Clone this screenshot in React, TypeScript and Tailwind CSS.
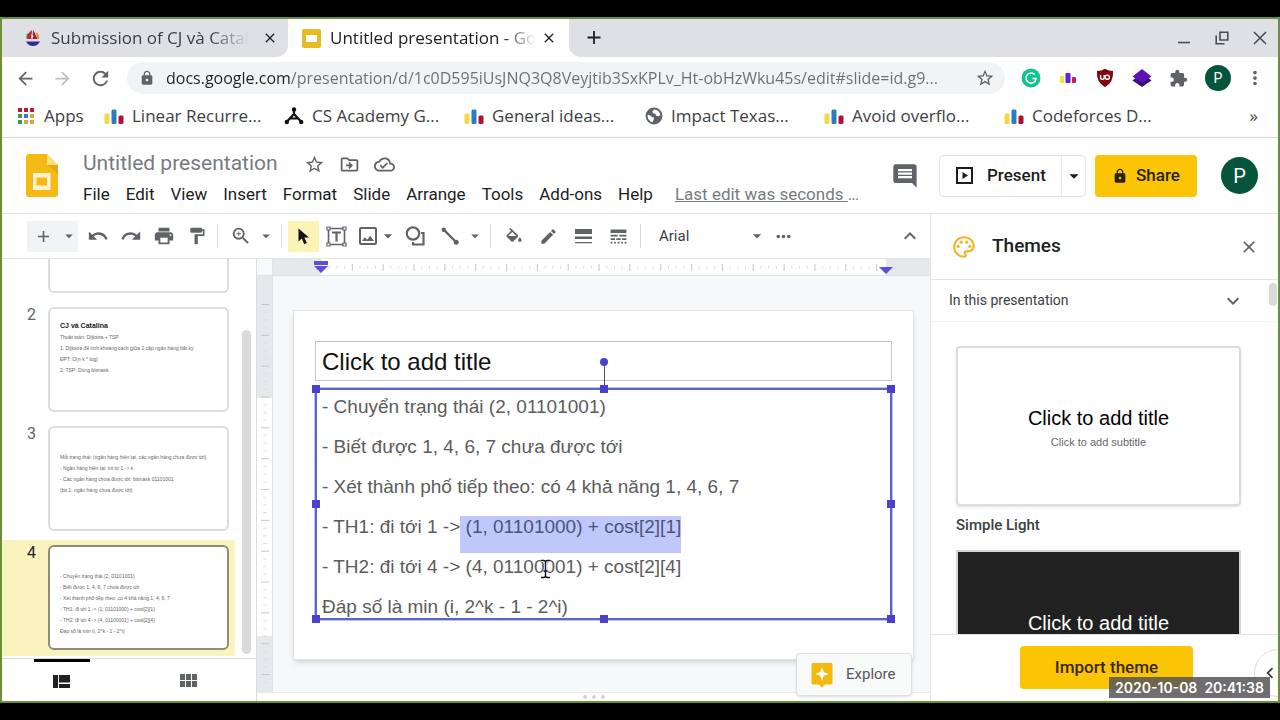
import type { ReactNode } from "react";
import {
  MdAdd,
  MdArrowBack,
  MdArrowDropDown,
  MdArrowForward,
  MdClose,
  MdComment,
  MdEdit,
  MdExtension,
  MdFormatPaint,
  MdKeyboardArrowDown,
  MdKeyboardArrowLeft,
  MdKeyboardArrowUp,
  MdLineStyle,
  MdLock,
  MdMoreHoriz,
  MdMoreVert,
  MdOutlineCloudDone,
  MdOutlineDriveFileMove,
  MdOutlineImage,
  MdOutlinePalette,
  MdPrint,
  MdRedo,
  MdRefresh,
  MdStarBorder,
  MdUndo,
  MdZoomIn,
} from "react-icons/md";

const bookmarks = [
  { label: "Linear Recurre...", icon: "bars" },
  { label: "CS Academy G...", icon: "academy" },
  { label: "General ideas...", icon: "bars" },
  { label: "Impact Texas...", icon: "globe" },
  { label: "Avoid overflo...", icon: "bars" },
  { label: "Codeforces D...", icon: "bars" },
];

const menus = ["File", "Edit", "View", "Insert", "Format", "Slide", "Arrange", "Tools", "Add-ons", "Help"];

const slides = [
  { n: 1, title: "", lines: [] as string[] },
  {
    n: 2,
    title: "CJ và Catalina",
    lines: [
      "Thuật toán: Dijkstra + TSP",
      "1. Dijkstra để tính khoảng cách giữa 2 cặp ngân hàng bất kỳ.",
      "ĐPT: O(n·k * log)",
      "2. TSP: Dùng bitmask",
    ],
  },
  {
    n: 3,
    title: "",
    lines: [
      "Mỗi trạng thái: (ngân hàng hiện tại, các ngân hàng chưa được tới)",
      "- Ngân hàng hiện tại: int từ 1 -> k",
      "- Các ngân hàng chưa được tới: bitmask 01101001",
      "(bit 1: ngân hàng chưa được tới)",
    ],
  },
  {
    n: 4,
    title: "",
    lines: [
      "- Chuyển trạng thái (2, 01101001)",
      "- Biết được 1, 4, 6, 7 chưa được tới",
      "- Xét thành phố tiếp theo: có 4 khả năng 1, 4, 6, 7",
      "- TH1: đi tới 1 -> (1, 01101000) + cost[2][1]",
      "- TH2: đi tới 4 -> (4, 01100001) + cost[2][4]",
      "Đáp số là min (i, 2^k - 1 - 2^i)",
    ],
  },
];

function BarsIcon({ colors = ["#f5d848", "#2a7dc0", "#b01030"], size = 20 }) {
  return (
    <svg width={size} height={size} viewBox="0 0 20 20" className="shrink-0">
      <rect x="0.5" y="7.5" width="5" height="10.5" rx="1.5" fill={colors[0]} />
      <rect x="7.5" y="3.5" width="5" height="14.5" rx="1.5" fill={colors[1]} />
      <rect x="14.5" y="9.5" width="5" height="8.5" rx="1.5" fill={colors[2]} />
    </svg>
  );
}

function BookmarkIcon({ kind }: { kind: string }) {
  if (kind === "bars") return <BarsIcon />;
  if (kind === "academy") {
    return (
      <svg width="20" height="20" viewBox="0 0 20 20" className="shrink-0">
        <path d="M10 3.5 L10 8 L2.5 16 M10 8 L17.5 16 M6.5 12.5 H13.5" stroke="#111" strokeWidth="2.2" fill="none" />
        <circle cx="10" cy="3.5" r="2.2" fill="#111" />
        <circle cx="2.8" cy="16" r="2.2" fill="#111" />
        <circle cx="17.2" cy="16" r="2.2" fill="#111" />
      </svg>
    );
  }
  return (
    <svg width="18" height="18" viewBox="0 0 18 18" className="ml-px shrink-0">
      <circle cx="9" cy="9" r="8.4" fill="#5f6368" />
      <path
        d="M2.6 8 C4.5 8 6 8.6 6.6 10 L9 10.5 L8.6 12.6 L7.6 15.2 C4.6 14.6 2.5 12 2.6 8 Z M9 2.6 L7.2 5 L8.4 6.6 L10.6 6.8 L11 8.6 L13.2 9.2 L15.3 8.4 C15 5.2 12.6 2.8 9 2.6 Z"
        fill="#fff"
      />
    </svg>
  );
}

function TabStrip() {
  return (
    <div className="flex h-[38px] text-[17px] text-[#3b3e42]">
      <div className="flex w-[286px] items-center rounded-br-xl bg-[#dee0e6] pl-[21px] pr-[9px]">
        <svg width="20" height="20" viewBox="0 0 20 20" className="shrink-0">
          <path d="M3.5 6.5 Q3.5 5 6 5.5 L6 11 H3.5 Z" fill="#38a03c" />
          <path d="M8.8 2 V11 H4 Q4.5 5 8.8 2 Z" fill="#c52238" />
          <path d="M10 1.5 L14.5 11 H9.5 Z" fill="#9c1c2c" />
          <path d="M12.5 4 Q16.5 6 16 11 L14.6 11 Z" fill="#ee7a22" />
          <path d="M8.3 6 L10.8 8.5 L8.3 11 Z" fill="#f4f4f4" />
          <path d="M3 13.5 H17 Q14.5 18 10 18 Q5.500 18 3 13.5 Z" fill="#2f2b9a" />
        </svg>
        <span className="ml-2 whitespace-nowrap [mask-image:linear-gradient(90deg,#000_80%,transparent)]">
          Submission of CJ và Catal
        </span>
        <button aria-label="Close tab" className="ml-auto flex size-[18px] items-center justify-center text-[#202124]">
          <MdClose size={16} />
        </button>
      </div>
      <div className="flex w-[281px] items-center pl-[14px] pr-[11px] text-[#202124]">
        <svg width="19" height="19" viewBox="0 0 19 19" className="shrink-0">
          <rect width="19" height="19" rx="2" fill="#e6bb24" />
          <rect x="4" y="6" width="11" height="7" fill="#fff" />
        </svg>
        <span className="ml-[9px] whitespace-nowrap [mask-image:linear-gradient(90deg,#000_84%,transparent)]">
          Untitled presentation - Go
        </span>
        <button aria-label="Close tab" className="ml-auto flex size-[18px] items-center justify-center">
          <MdClose size={16} />
        </button>
      </div>
      <div className="flex flex-1 items-center rounded-bl-xl bg-[#dee0e6] pl-[13px] pr-[11px]">
        <button aria-label="New tab" className="text-[#202124]">
          <svg width="24" height="24" viewBox="0 0 24 24" fill="none" stroke="currentColor" strokeWidth="1.8" className="block">
            <path d="M12 5 V18 M5.500 11.500 H18.500" />
          </svg>
        </button>
        <div className="ml-auto flex items-center gap-6 text-[#4a4d51]">
          <button aria-label="Minimize">
            <svg width="14" height="14" viewBox="0 0 14 14" fill="none" stroke="currentColor" strokeWidth="1.6">
              <path d="M1 11.5 H13" />
            </svg>
          </button>
          <button aria-label="Restore">
            <svg width="14" height="14" viewBox="0 0 14 14" fill="none" stroke="currentColor" strokeWidth="1.6">
              <path d="M5 1.2 H12.8 V9 H5 Z M1.2 4.5 V12.8 H9.5" />
            </svg>
          </button>
          <button aria-label="Close window">
            <svg width="14" height="14" viewBox="0 0 14 14" fill="none" stroke="currentColor" strokeWidth="1.6">
              <path d="M1 1 L13 13 M13 1 L1 13" />
            </svg>
          </button>
        </div>
      </div>
    </div>
  );
}

function AddressBar() {
  return (
    <div className="flex h-[42px] items-center pl-[13px] pr-3 text-[#5f6368]">
      <button aria-label="Back">
        <MdArrowBack size={21} />
      </button>
      <button aria-label="Forward" className="ml-4 text-[#bcbec1]">
        <MdArrowForward size={21} />
      </button>
      <button aria-label="Reload" className="ml-4">
        <MdRefresh size={23} />
      </button>
      <div className="ml-[15px] flex h-8 flex-1 items-center rounded-full bg-[#f1f3f4] pl-3 pr-[10px]">
        <MdLock size={16} className="shrink-0" />
        <input
          aria-label="Address"
          readOnly
          value="docs.google.com/presentation/d/1c0D595iUsJNQ3Q8Veyjtib3SxKPLv_Ht-obHzWku45s/edit#slide=id.g9..."
          className="ml-[11px] min-w-0 flex-1 bg-[linear-gradient(90deg,#202124_125px,#6b6f73_125px)] bg-clip-text text-[16px] text-transparent outline-none"
        />
        <button aria-label="Bookmark this page">
          <MdStarBorder size={20} />
        </button>
      </div>
      <div className="ml-4 flex items-center gap-[17px]">
        <button aria-label="Grammarly">
          <svg width="20" height="20" viewBox="0 0 20 20" className="block">
            <circle cx="10" cy="10" r="9.5" fill="#17c08f" />
            <path d="M13.6 6.6 A5 5 0 1 0 15 10.6 H11.5 M15 10.6 L14 14" fill="none" stroke="#fff" strokeWidth="1.5" />
          </svg>
        </button>
        <button aria-label="Codeforces extension">
          <svg width="20" height="20" viewBox="0 0 20 20" className="block">
            <rect x="2" y="8" width="4" height="7" rx="1" fill="#f2e91c" />
            <rect x="7.500" y="5" width="5" height="10" rx="1" fill="#6a1be0" />
            <rect x="14" y="9" width="4" height="6" rx="1" fill="#d01848" />
          </svg>
        </button>
        <button aria-label="uBlock Origin">
          <svg width="20" height="20" viewBox="0 0 20 20" className="block">
            <path d="M10 0.8 Q13.5 3 18 3 Q19 14 10 19.2 Q1 14 2 3 Q6.5 3 10 0.8 Z" fill="#800610" />
            <path d="M5.6 7 V9.6 Q5.6 11.4 7.4 11.4 Q9.2 11.4 9.2 9.6 V7" fill="none" stroke="#fff" strokeWidth="1.4" />
            <circle cx="12.3" cy="9.2" r="2.1" fill="none" stroke="#fff" strokeWidth="1.4" />
          </svg>
        </button>
        <button aria-label="Layers extension">
          <svg width="20" height="20" viewBox="0 0 20 20" className="block">
            <path d="M10 5 L19.5 12.5 L10 19 L0.5 12.5 Z" fill="#35107a" />
            <path d="M10 1 L19.5 8.5 L10 15 L0.5 8.5 Z" fill="#5b12b4" />
          </svg>
        </button>
        <button aria-label="Extensions">
          <MdExtension size={19} />
        </button>
        <button
          aria-label="Profile"
          className="flex size-[26px] items-center justify-center rounded-full bg-[#06543c] text-[14px] text-white [font-family:Roboto,sans-serif]"
        >
          P
        </button>
      </div>
      <button aria-label="Menu" className="ml-[13px]">
        <MdMoreVert size={22} />
      </button>
    </div>
  );
}

function BookmarksBar() {
  return (
    <div className="flex h-[39px] items-center border-b border-[#d4d6d9] pb-1 pl-4 pr-5 text-[17px] text-[#3b3e42]">
      <a href="#apps" className="flex w-[86px] items-center gap-[10px]">
        <svg width="16" height="16" viewBox="0 0 16 16">
          {["#b01c30", "#b01c30", "#b01c30", "#3c9a58", "#3a78c8", "#d8a83c", "#3c9a58", "#c8a850", "#d8a83c"].map((c, i) => (
            <rect key={i} x={(i % 3) * 6} y={Math.floor(i / 3) * 6} width="4" height="4" fill={c} />
          ))}
        </svg>
        Apps
      </a>
      {bookmarks.map((b) => (
        <a key={b.label} href="#bookmark" className="flex w-[180px] items-center gap-2 whitespace-nowrap">
          <BookmarkIcon kind={b.icon} />
          {b.label}
        </a>
      ))}
      <button aria-label="More bookmarks" className="ml-auto">
        »
      </button>
    </div>
  );
}

function DocHeader() {
  return (
    <header className="flex h-[76px] items-center border-b border-[#e3e5e8] pl-6 pr-5">
      <svg width="32" height="43" viewBox="0 0 32 43" className="shrink-0">
        <path d="M3 0 H21 L32 11 V40 Q32 43 29 43 H3 Q0 43 0 40 V3 Q0 0 3 0 Z" fill="#f5ba14" />
        <path d="M21 0 L32 11 H21 Z" fill="#fbdf7c" />
        <path d="M21 11 H32 V20 Z" fill="#e5a80e" />
        <path d="M7 19 H24.500 V36 H7 Z M10.500 23.500 V31.500 H21 V23.500 Z" fill="#fdf3d2" fillRule="evenodd" />
      </svg>
      <div className="ml-[25px] min-w-0 pt-[7px]">
        <div className="flex h-8 items-center">
          <input
            aria-label="Presentation title"
            defaultValue="Untitled presentation"
            className="w-[207px] text-[21px] leading-8 text-[#777b7f] outline-none"
          />
          <div className="ml-[14px] flex items-center gap-[14px] pt-[3px] text-[#5f6368]">
            <button aria-label="Star">
              <MdStarBorder size={21} />
            </button>
            <button aria-label="Move">
              <MdOutlineDriveFileMove size={21} />
            </button>
            <button aria-label="Saved to Drive">
              <MdOutlineCloudDone size={21} />
            </button>
          </div>
        </div>
        <nav className="flex h-8 items-center gap-4 whitespace-nowrap text-[17px] text-[#1c1d1f]">
          {menus.map((m) => (
            <button key={m}>{m}</button>
          ))}
          <a href="#history" className="ml-[6px] text-[#777b7f]">
            <span className="whitespace-pre underline">Last edit was seconds </span>…
          </a>
        </nav>
      </div>
      <button aria-label="Comments" className="ml-auto text-[#5f6368]">
        <MdComment size={28} />
      </button>
      <div className="ml-5 flex h-[42px] shrink-0 rounded border border-[#e1e3e6] text-[17px] font-medium text-[#1c1d1f]">
        <button className="flex w-[121px] items-center gap-[14px] pl-4">
          <svg width="17" height="17" viewBox="0 0 17 17" fill="none" stroke="currentColor" strokeWidth="2">
            <rect x="1" y="1" width="15" height="15" />
            <path d="M6.500 5 V12 L12 8.500 Z" fill="currentColor" stroke="none" />
          </svg>
          Present
        </button>
        <button aria-label="Present options" className="flex w-6 items-center justify-center border-l border-[#e1e3e6]">
          <MdArrowDropDown size={22} className="shrink-0" />
        </button>
      </div>
      <button className="ml-[9px] flex h-[42px] w-[102px] shrink-0 items-center justify-center gap-2 rounded bg-[#fbc404] text-[17px] font-medium text-[#2a2205]">
        <MdLock size={16} />
        Share
      </button>
      <button
        aria-label="Account"
        className="ml-6 flex size-[37px] shrink-0 items-center justify-center rounded-full bg-[#06543c] text-[20px] text-white"
      >
        P
      </button>
    </header>
  );
}

function Tool({ label, className = "w-[33px]", children }: { label: string; className?: string; children: ReactNode }) {
  return (
    <button aria-label={label} className={"flex h-[31px] shrink-0 items-center justify-center " + className}>
      {children}
    </button>
  );
}

function Divider({ className }: { className: string }) {
  return <div className={"h-6 w-px shrink-0 bg-[#dadce0] " + className} />;
}

function Toolbar() {
  return (
    <div className="flex h-[45px] items-center border-b border-[#e3e5e8] pl-[25px] pr-2 text-[#5f6368]">
      <div className="flex bg-[#f1f3f4]">
        <Tool label="New slide">
          <MdAdd size={19} />
        </Tool>
        <Tool label="New slide with layout" className="w-[18px]">
          <MdArrowDropDown size={20} />
        </Tool>
      </div>
      <Tool label="Undo" className="ml-[3px] w-[33px]">
        <MdUndo size={22} />
      </Tool>
      <Tool label="Redo">
        <MdRedo size={22} />
      </Tool>
      <Tool label="Print">
        <MdPrint size={22} />
      </Tool>
      <Tool label="Paint format">
        <MdFormatPaint size={20} />
      </Tool>
      <Divider className="ml-1" />
      <Tool label="Zoom" className="ml-[6px] w-[33px]">
        <MdZoomIn size={22} />
      </Tool>
      <Tool label="Zoom options" className="w-[18px]">
        <MdArrowDropDown size={20} />
      </Tool>
      <Divider className="ml-[6px]" />
      <Tool label="Select" className="ml-[6px] w-[31px] bg-[#fbf4b4] text-[#111]">
        <svg width="12" height="17" viewBox="0 0 12 17" fill="currentColor">
          <path d="M0.500 0.500 V13.500 L3.800 10.600 L6.200 16.200 L8.800 15 L6.400 9.600 H11 Z" />
        </svg>
      </Tool>
      <Tool label="Text box" className="w-[34px]">
        <svg width="21" height="21" viewBox="0 0 21 21" fill="none" stroke="currentColor">
          <path d="M4 2.500 H17 M4 18.500 H17 M2.500 4 V17 M18.500 4 V17" strokeWidth="1.600" />
          <path d="M1 1 H4 V4 H1 Z M17 1 H20 V4 H17 Z M1 17 H4 V20 H1 Z M17 17 H20 V20 H17 Z" strokeWidth="1.200" />
          <path d="M6 6.500 H15 M10.500 6.500 V15.500" strokeWidth="2.200" />
        </svg>
      </Tool>
      <Tool label="Image" className="w-[29px]">
        <MdOutlineImage size={24} />
      </Tool>
      <Tool label="Image options" className="w-3">
        <MdArrowDropDown size={20} className="shrink-0" />
      </Tool>
      <Tool label="Shape" className="ml-[5px] w-[31px]">
        <svg width="20" height="20" viewBox="0 0 20 20" fill="none" stroke="currentColor" strokeWidth="2.200">
          <circle cx="8" cy="7.500" r="6.200" />
          <path d="M16 7 H18.500 V18.500 H8 V16" />
        </svg>
      </Tool>
      <Tool label="Line" className="ml-[3px] w-[33px]">
        <svg width="18" height="18" viewBox="0 0 18 18" fill="currentColor" stroke="currentColor">
          <path d="M3 3 L15 15" strokeWidth="2.400" />
          <circle cx="2.800" cy="2.800" r="2.200" stroke="none" />
          <circle cx="15.200" cy="15.200" r="2.500" stroke="none" />
        </svg>
      </Tool>
      <Tool label="Line options" className="w-[18px]">
        <MdArrowDropDown size={20} />
      </Tool>
      <Divider className="ml-[6px]" />
      <Tool label="Fill color" className="ml-[5px] w-[35px]">
        <svg width="20" height="20" viewBox="0 -2 24 24" fill="currentColor">
          <path d="M16.560 8.940 L7.620 0 L6.210 1.410 L8.590 3.790 L3.440 8.940 a1.490 1.490 0 0 0 0 2.120 l5.500 5.500 c.290.290.680.440 1.060.440 s.770-.150 1.060-.440 l5.500-5.500 c.590-.580.590-1.530 0-2.120 z M5.210 10 L10 5.210 L14.790 10 Z M19 11.500 s-2 2.170-2 3.500 c0 1.100.900 2 2 2 s2-.900 2-2 c0-1.330-2-3.500-2-3.500 z" />
        </svg>
      </Tool>
      <Tool label="Border color" className="w-[35px]">
        <MdEdit size={19} />
      </Tool>
      <Tool label="Border weight" className="w-[35px]">
        <svg width="17" height="15" viewBox="0 0 17 15" fill="currentColor">
          <path d="M0 0 H17 V5 H0 Z M0 7.500 H17 V10 H0 Z M0 13 H17 V14.300 H0 Z" />
        </svg>
      </Tool>
      <Tool label="Border dash" className="w-[35px]">
        <MdLineStyle size={21} />
      </Tool>
      <Divider className="ml-1" />
      <div className="ml-[18px] flex items-center">
        <select aria-label="Font" className="w-[88px] appearance-none text-[15px] text-[#3c4043] outline-none">
          <option>Arial</option>
        </select>
        <MdArrowDropDown size={20} />
      </div>
      <Tool label="More">
        <MdMoreHoriz size={21} />
      </Tool>
      <button aria-label="Hide the menus" className="ml-auto">
        <MdKeyboardArrowUp size={24} />
      </button>
    </div>
  );
}

function Filmstrip() {
  return (
    <aside className="flex w-[255px] shrink-0 flex-col border-r border-[#dadce0]">
      <div className="relative flex min-h-0 flex-1 flex-col justify-end gap-[3px] overflow-hidden pb-[2px]">
        {slides.map((s) => {
          const active = s.n === 4;
          return (
            <div key={s.n} className={"flex w-[233px] shrink-0 pb-[6px] pt-[5px] " + (active ? "bg-[#f9f4bf]" : "")}>
              <span className={"w-[46px] pr-3 text-right text-[16px] leading-4 " + (active ? "text-[#202124]" : "text-[#5f6368]")}>
                {s.n}
              </span>
              <button
                aria-label={`Slide ${s.n}`}
                className={
                  "flex h-[105px] w-[181px] flex-col items-start overflow-hidden whitespace-nowrap rounded-md border-2 bg-white pl-[10px] text-left text-[5px] leading-[11px] text-[#666] [font-family:'Liberation_Sans',sans-serif] " +
                  (s.title ? "pt-[10px] " : "pt-6 ") +
                  (active ? "border-[#8f8d78]" : "border-[#dadce0]")
                }
              >
                {s.title && <b className="text-[7px] leading-[13px] text-[#222]">{s.title}</b>}
                {s.lines.map((l) => (
                  <span key={l}>{l}</span>
                ))}
              </button>
            </div>
          );
        })}
        <div className="absolute bottom-1 right-[5px] top-[71px] w-[9px] rounded-full bg-[#d9dadc]" />
      </div>
      <div className="flex h-[43px] border-t border-[#dadce0]">
        <div className="flex flex-1 justify-center pr-2">
          <button aria-label="Filmstrip view" className="flex w-14 items-center justify-center border-t-[3px] border-black text-[#202124]">
            <svg width="17" height="13" viewBox="0 0 17 13" fill="currentColor">
              <path d="M0 0 H5 V13 H0 Z M6 0 H17 V7.500 H6 Z M6 9 H17 V13 H6 Z" />
            </svg>
          </button>
        </div>
        <div className="flex flex-1 justify-center pr-2">
          <button aria-label="Grid view" className="flex w-14 items-center justify-center text-[#5f6368]">
            <svg width="17" height="13" viewBox="0 0 17 13" fill="currentColor">
              <path d="M0 0 H5 V6 H0 Z M6 0 H11 V6 H6 Z M12 0 H17 V6 H12 Z M0 7 H5 V13 H0 Z M6 7 H11 V13 H6 Z M12 7 H17 V13 H12 Z" />
            </svg>
          </button>
        </div>
      </div>
    </aside>
  );
}

// Horizontal ruler: one inch mark, then three short quarter marks.
function TopRuler() {
  const quarters = Array.from({ length: 73 }, (_, i) => i);
  return (
    <svg width="100%" height="17" className="block border-b border-[#e0e2e5] bg-white">
      <rect width="48" height="17" fill="#e6e8ec" />
      <rect x="613" width="100%" height="17" fill="#e6e8ec" />
      {quarters.map((i) => (
        <path
          key={i}
          d={i % 4 === 0 ? `M${48.5 + i * 7.71} 5 V12` : `M${48.5 + i * 7.71} 7 V10`}
          stroke={i % 4 === 0 ? "#c4c6ca" : "#dcdee0"}
        />
      ))}
      <path d="M41 2 H55 V6 H41 Z M41 7 H55 L48 14 Z M606 8 H620 L613 15 Z" fill="#5b50d6" />
    </svg>
  );
}

function SideRuler() {
  const marks = Array.from({ length: 50 }, (_, i) => i);
  return (
    <svg width="16" height="100%" className="block h-full shrink-0 border-r border-[#e0e2e5] bg-white">
      <rect width="16" height="122" fill="#e6e8ec" />
      <rect y="360" width="16" height="100%" fill="#e6e8ec" />
      {marks.map((i) => (
        <path
          key={i}
          d={i % 4 === 0 ? `M4 ${28.5 + i * 7.71} H12` : `M6 ${28.5 + i * 7.71} H10`}
          stroke={i % 4 === 0 ? "#c4c6ca" : "#dcdee0"}
        />
      ))}
    </svg>
  );
}

const handles = [
  "-left-[5px] -top-[5px]",
  "left-1/2 -top-[5px] -translate-x-1/2",
  "-right-[5px] -top-[5px]",
  "-left-[5px] top-1/2 -translate-y-1/2",
  "-right-[5px] top-1/2 -translate-y-1/2",
  "-left-[5px] -bottom-[5px]",
  "left-1/2 -bottom-[5px] -translate-x-1/2",
  "-right-[5px] -bottom-[5px]",
];

function Canvas() {
  return (
    <main className="flex min-w-0 flex-1 flex-col">
      <div className="flex">
        <div className="w-4 shrink-0 border-b border-r border-[#e0e2e5] bg-[#f7f9fa]" />
        <div className="min-w-0 flex-1">
          <TopRuler />
        </div>
      </div>
      <div className="flex min-h-0 flex-1">
        <SideRuler />
        <div className="relative min-w-0 flex-1 overflow-hidden bg-[#f6f8f9] pb-8 pl-5 pr-4 pt-[34px]">
          <section className="h-full border border-[#e0e2e5] bg-white px-[21px] pt-[30px] shadow-md [font-family:'Liberation_Sans',sans-serif]">
            <h1 className="h-10 border border-[#c4c6c9] pl-[6px] text-[24px] leading-[40px] text-[#111]">Click to add title</h1>
            <div className="relative mt-[7px] h-[232px] border-2 border-[#5a64cc] pl-[5px] text-[19px] leading-[40px] text-[#5c5c5c] ring-1 ring-[#b9c2f2]">
              <div className="-mt-[3px] whitespace-nowrap">
                <p>- Chuyển trạng thái (2, 01101001)</p>
                <p>- Biết được 1, 4, 6, 7 chưa được tới</p>
                <p>- Xét thành phố tiếp theo: có 4 khả năng 1, 4, 6, 7</p>
                <p>
                  - TH1: đi tới 1 -&gt;
                  <span className="bg-[#bfc8fb] pb-4 text-[#4e5378]"> (1, 01101000) + cost[2][1]</span>
                </p>
                <p>- TH2: đi tới 4 -&gt; (4, 01100001) + cost[2][4]</p>
                <p>Đáp số là min (i, 2^k - 1 - 2^i)</p>
              </div>
              <div className="absolute -top-[27px] left-1/2 h-6 w-px bg-[#4a4f8c]" />
              <div className="absolute -top-8 left-1/2 size-2 -translate-x-1/2 rounded-full bg-[#4a40cc]" />
              {handles.map((h) => (
                <div key={h} className={"absolute size-2 bg-[#4a40cc] " + h} />
              ))}
              <svg width="11" height="20" viewBox="0 0 11 20" fill="none" className="absolute left-[223px] top-[169px]">
                <path
                  d="M1 1.500 H3.500 Q5.500 1.500 5.500 3.500 V16.500 Q5.500 18.500 3.500 18.500 H1 M10 1.500 H7.500 Q5.500 1.500 5.500 3.500 V16.500 Q5.500 18.500 7.500 18.500 H10 M3.500 12 H7.500"
                  stroke="#fff"
                  strokeWidth="3"
                />
                <path
                  d="M1 1.500 H3.500 Q5.500 1.500 5.500 3.500 V16.500 Q5.500 18.500 3.500 18.500 H1 M10 1.500 H7.500 Q5.500 1.500 5.500 3.500 V16.500 Q5.500 18.500 7.500 18.500 H10 M3.500 12 H7.500"
                  stroke="#111"
                  strokeWidth="1.400"
                />
              </svg>
            </div>
          </section>
        </div>
      </div>
      <div className="relative flex h-[9px] items-center justify-center gap-[5px] border-t border-[#e8e9e0]">
        <i className="size-1 rounded-full bg-[#d0d2d5]" />
        <i className="size-1 rounded-full bg-[#d0d2d5]" />
        <i className="size-1 rounded-full bg-[#d0d2d5]" />
        <button className="absolute bottom-[5px] right-[18px] flex h-[43px] w-[116px] items-center gap-[13px] rounded-sm border border-[#dcdee1] bg-[#f8f9f9] pl-[14px] text-[15px] text-[#55585c] shadow-sm">
          <svg width="22" height="26" viewBox="0 0 22 26">
            <path d="M2 1 H20 Q21.500 1 21.500 2.500 V21 Q21.500 22.500 20 22.500 H14 L11 25.500 L8 22.500 H2 Q0.500 22.500 0.500 21 V2.500 Q0.500 1 2 1 Z" fill="#f4b90f" />
            <path d="M11 5 L12.800 10.200 L18 12 L12.800 13.800 L11 19 L9.200 13.800 L4 12 L9.200 10.200 Z" fill="#fff" />
          </svg>
          Explore
        </button>
      </div>
    </main>
  );
}

function ThemesPanel() {
  return (
    <aside className="relative flex w-[348px] shrink-0 flex-col overflow-hidden border-l border-[#e3e5e8] bg-white">
      <div className="flex h-[66px] items-center border-b border-[#e3e5e8] pl-5 pr-[19px]">
        <MdOutlinePalette size={26} className="text-[#f0b428]" />
        <h2 className="ml-[15px] text-[19px] font-medium text-[#202124]">Themes</h2>
        <button aria-label="Close themes" className="ml-auto text-[#5f6368]">
          <MdClose size={20} />
        </button>
      </div>
      <div className="relative flex min-h-0 flex-1 flex-col overflow-hidden">
        <button className="flex h-[42px] shrink-0 items-center justify-between border-b border-[#f1f3f4] pl-[18px] pr-[33px] text-[14px] text-[#3c4043]">
          In this presentation
          <MdKeyboardArrowDown size={24} className="text-[#5f6368]" />
        </button>
        <div className="flex flex-col pl-[25px] pr-[37px] pt-6">
          <button className="flex h-[160px] flex-col items-center rounded-sm border-2 border-[#dadce0] pt-[56px] shadow-sm [font-family:'Liberation_Sans',sans-serif]">
            <span className="text-[20px] leading-7 text-black">Click to add title</span>
            <span className="text-[11px] leading-5 text-[#666]">Click to add subtitle</span>
          </button>
          <span className="py-2 text-[15px] font-medium leading-[22px] text-[#3c4043]">Simple Light</span>
          <button className="mt-[6px] flex h-[160px] shrink-0 flex-col items-center border-2 border-[#d4d6d9] bg-[#212121] pt-[57px] [font-family:'Liberation_Sans',sans-serif]">
            <span className="text-[20px] leading-7 text-white">Click to add title</span>
          </button>
        </div>
        <div className="absolute right-[1px] top-[3px] h-[23px] w-2 rounded bg-[#d9dadc]" />
      </div>
      <div className="flex h-[67px] items-start justify-center border-t border-[#e3e5e8] pl-1 pt-[11px]">
        <button className="h-[43px] w-[173px] rounded bg-[#fbc404] text-[17px] font-medium text-[#3a2a08]">Import theme</button>
      </div>
      <button
        aria-label="Show side panel"
        className="absolute -right-[24px] bottom-1 flex size-12 items-center rounded-full border border-[#dadce0] pl-1 text-[#3c4043]"
      >
        <MdKeyboardArrowLeft size={22} />
      </button>
      <time className="absolute bottom-[3px] right-2 flex h-[21px] w-[161px] items-center justify-center whitespace-pre bg-[#555557]/85 text-[14px] font-semibold text-white [font-family:Inter,sans-serif]">
        2020-10-08  20:41:38
      </time>
    </aside>
  );
}

export default function App() {
  return (
    <div className="flex h-screen flex-col bg-black py-[17px]">
      <div className="flex min-h-0 flex-1 flex-col overflow-hidden border-2 border-[#6b8f35] bg-white [font-family:'Open_Sans','Noto_Sans',sans-serif]">
        <TabStrip />
        <AddressBar />
        <BookmarksBar />
        <div className="flex min-h-0 flex-1 flex-col [font-family:Roboto,'Noto_Sans',sans-serif]">
          <DocHeader />
          <div className="flex min-h-0 flex-1">
            <div className="flex min-w-0 flex-1 flex-col">
              <Toolbar />
              <div className="flex min-h-0 flex-1">
                <Filmstrip />
                <Canvas />
              </div>
            </div>
            <ThemesPanel />
          </div>
        </div>
      </div>
    </div>
  );
}
